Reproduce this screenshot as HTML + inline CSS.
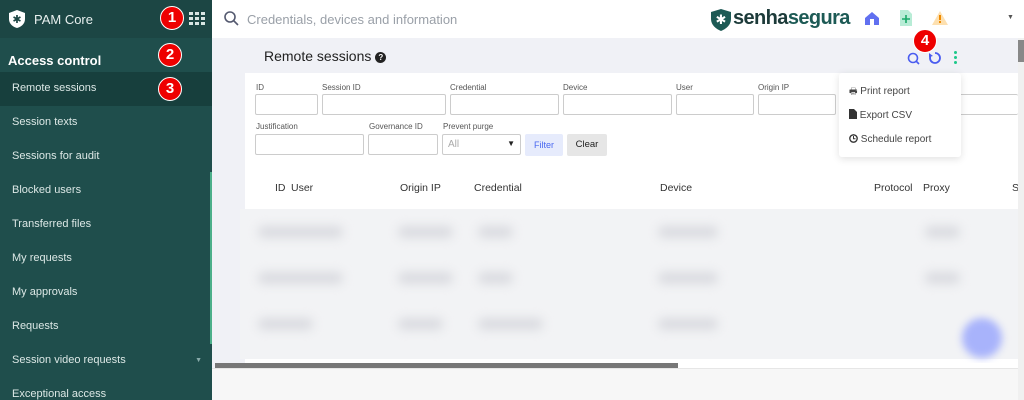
<!DOCTYPE html>
<html style="width:1024px;height:400px;overflow:hidden"><head><meta charset="utf-8"><style>
*{box-sizing:border-box;margin:0;padding:0}
body{width:1024px;height:400px;overflow:hidden;font-family:"Liberation Sans",sans-serif;background:#f0f1f6;position:relative}
.side{position:absolute;left:0;top:0;width:212px;height:400px;background:#1f4e4c;color:#e6efee;overflow:hidden}
.sidetop{height:38px;background:#1c4644;display:flex;align-items:center;padding-left:8px}
.sidetop span{font-size:13px;margin-left:8px;color:#e8f0ef}
.sec{font-size:13px;font-weight:bold;color:#fff;padding:15px 0 0 8px;height:34px}
.item{font-size:11px;height:34px;line-height:33px;padding-left:12px;color:#dce8e6}
.item.act{background:#173f3d}
.badge{position:absolute;width:24px;height:24px;border-radius:50%;background:#e00;border:1.5px solid #fff;color:#fff;font-weight:bold;font-size:15px;text-align:center;line-height:21px}
.top{position:absolute;left:212px;top:0;right:0;height:38px;background:#fff}
.ph{position:absolute;left:35px;top:12px;font-size:13px;color:#9aa0a8}
.card{position:absolute;left:245px;top:73px;width:773px;height:290px;background:#fff}
.lbl{position:absolute;font-size:8px;color:#555}
.inp{position:absolute;height:21px;border:1px solid #ccc;border-radius:2px;background:#fff}
.th{position:absolute;top:182px;font-size:10.5px;color:#333}
.blur{position:absolute;height:12px;background:#dadbe0;border-radius:6px;filter:blur(5px)}
.menu{position:absolute;left:839px;top:73px;width:122px;height:84px;background:#fff;box-shadow:0 2px 8px rgba(0,0,0,.12);border-radius:3px;font-size:10px;color:#444}
.menu div{position:absolute;left:10px}
</style></head><body>
<div class="side">
 <div class="sidetop"><svg width="18" height="20" viewBox="0 0 18 20"><path d="M9 1 L17 4 V10 C17 15 13 18 9 19 C5 18 1 15 1 10 V4 Z" fill="#fff"/><text x="9" y="14" font-size="11" text-anchor="middle" fill="#1c4644">✱</text></svg><span>PAM Core</span>
 <svg style="position:absolute;left:189px;top:12px" width="16" height="14"><g fill="#d8e6e4"><rect x="0" y="0" width="4" height="3"/><rect x="6" y="0" width="4" height="3"/><rect x="12" y="0" width="4" height="3"/><rect x="0" y="5" width="4" height="3"/><rect x="6" y="5" width="4" height="3"/><rect x="12" y="5" width="4" height="3"/><rect x="0" y="10" width="4" height="3"/><rect x="6" y="10" width="4" height="3"/><rect x="12" y="10" width="4" height="3"/></g></svg></div>
 <div class="sec">Access control</div>
 <div class="item act">Remote sessions</div>
 <div class="item">Session texts</div>
 <div class="item">Sessions for audit</div>
 <div class="item">Blocked users</div>
 <div class="item">Transferred files</div>
 <div class="item">My requests</div>
 <div class="item">My approvals</div>
 <div class="item">Requests</div>
 <div class="item">Session video requests<span style="float:right;margin-right:10px;font-size:7px;color:#8aa">▼</span></div>
 <div class="item">Exceptional access</div>
 <div style="position:absolute;left:210px;top:172px;width:3px;height:172px;background:#4caf8a"></div>
</div>
<div class="badge" style="left:160px;top:6px">1</div>
<div class="badge" style="left:158px;top:43px">2</div>
<div class="badge" style="left:158px;top:77px">3</div>
<div class="top">
 <svg style="position:absolute;left:12px;top:11px" width="15" height="15"><circle cx="6" cy="6" r="5" fill="none" stroke="#555a70" stroke-width="1.6"/><line x1="10" y1="10" x2="14" y2="14" stroke="#555a70" stroke-width="1.6"/></svg>
 <div class="ph">Credentials, devices and information</div>
 <svg style="position:absolute;left:498px;top:8px" width="22" height="24" viewBox="0 0 22 24"><path d="M11 1 L21 4 V11 C21 17 16 21 11 23 C6 21 1 17 1 11 V4 Z" fill="#1d5a55"/><text x="11" y="16" font-size="13" text-anchor="middle" fill="#fff">✱</text></svg>
 <div style="position:absolute;left:521px;top:7px;font-size:20px;font-weight:bold;color:#1d3b3a;letter-spacing:-0.6px">senha<span style="color:#1d5a55">segura</span></div>
 <svg style="position:absolute;left:653px;top:12px" width="14" height="13"><path d="M7 0 L14 6 V13 H0 V6 Z" fill="#6170f0"/><rect x="5" y="7" width="4" height="6" fill="#fff"/></svg>
 <svg style="position:absolute;left:688px;top:10px" width="12" height="16"><path d="M0 0 H8 L12 4 V16 H0 Z" fill="#b8ecd6"/><path d="M6 5 V13 M2 9 H10" stroke="#18a868" stroke-width="1.6"/></svg>
 <svg style="position:absolute;left:720px;top:11px" width="16" height="14"><path d="M8 0 L16 14 H0 Z" fill="#fde0b0"/><rect x="7" y="4" width="2" height="5" fill="#f08a00"/><rect x="7" y="10" width="2" height="2" fill="#f08a00"/></svg>
 <div style="position:absolute;left:795px;top:14px;font-size:7px;color:#555">▼</div>
</div>
<div style="position:absolute;left:264px;top:48px;font-size:14px;color:#222">Remote sessions <span style="display:inline-block;width:11px;height:11px;border-radius:50%;background:#222;color:#fff;font-size:8px;text-align:center;line-height:11px;font-weight:bold;vertical-align:1px">?</span></div>
<svg style="position:absolute;left:907px;top:52px" width="14" height="14"><circle cx="6" cy="6" r="4.5" fill="none" stroke="#4a5cf0" stroke-width="1.6"/><line x1="9" y1="9" x2="12" y2="12" stroke="#4a5cf0" stroke-width="1.6"/></svg>
<svg style="position:absolute;left:928px;top:51px" width="14" height="14"><path d="M3 4 A5 5 0 1 0 7 2" fill="none" stroke="#4a5cf0" stroke-width="1.8"/><path d="M1 2 L5 5 L1 6 Z" fill="#4a5cf0"/></svg>
<div style="position:absolute;left:954px;top:51px;width:3px"><div style="width:3px;height:3px;border-radius:50%;background:#1cc88a;margin-bottom:2px"></div><div style="width:3px;height:3px;border-radius:50%;background:#1cc88a;margin-bottom:2px"></div><div style="width:3px;height:3px;border-radius:50%;background:#1cc88a"></div></div>
<div class="card"></div>
<div class="lbl" style="left:256px;top:83px">ID</div><div class="inp" style="left:255px;top:94px;width:63px"></div>
<div class="lbl" style="left:322px;top:83px">Session ID</div><div class="inp" style="left:322px;top:94px;width:124px"></div>
<div class="lbl" style="left:450px;top:83px">Credential</div><div class="inp" style="left:450px;top:94px;width:109px"></div>
<div class="lbl" style="left:563px;top:83px">Device</div><div class="inp" style="left:563px;top:94px;width:109px"></div>
<div class="lbl" style="left:676px;top:83px">User</div><div class="inp" style="left:676px;top:94px;width:78px"></div>
<div class="lbl" style="left:758px;top:83px">Origin IP</div><div class="inp" style="left:758px;top:94px;width:78px"></div>
<div class="inp" style="left:958px;top:94px;width:60px;border-right:none"></div>
<div class="lbl" style="left:256px;top:122px">Justification</div><div class="inp" style="left:255px;top:134px;width:109px"></div>
<div class="lbl" style="left:369px;top:122px">Governance ID</div><div class="inp" style="left:368px;top:134px;width:70px"></div>
<div class="lbl" style="left:443px;top:122px">Prevent purge</div><div class="inp" style="left:442px;top:134px;width:79px;font-size:10px;color:#aaa;padding:4px 5px">All<span style="float:right;color:#222;font-size:8px">▼</span></div>
<div style="position:absolute;left:525px;top:134px;width:38px;height:22px;background:#e6ebfc;border-radius:2px;font-size:9px;color:#4a68f0;text-align:center;line-height:22px">Filter</div>
<div style="position:absolute;left:567px;top:134px;width:40px;height:22px;background:#e6e6e6;border-radius:2px;font-size:9.5px;color:#222;text-align:center;line-height:22px">Clear</div>
<div class="th" style="left:275px">ID</div><div class="th" style="left:291px">User</div><div class="th" style="left:400px">Origin IP</div><div class="th" style="left:474px">Credential</div><div class="th" style="left:660px">Device</div><div class="th" style="left:874px">Protocol</div><div class="th" style="left:923px">Proxy</div><div class="th" style="left:1012px">S</div>
<div style="position:absolute;left:240px;top:209px;width:778px;height:150px;background:#f2f3f5"></div>
<div class="blur" style="left:258px;top:226px;width:85px"></div><div class="blur" style="left:398px;top:226px;width:55px"></div><div class="blur" style="left:478px;top:226px;width:35px"></div><div class="blur" style="left:658px;top:226px;width:60px"></div><div class="blur" style="left:925px;top:226px;width:35px"></div>
<div class="blur" style="left:258px;top:272px;width:85px"></div><div class="blur" style="left:398px;top:272px;width:55px"></div><div class="blur" style="left:478px;top:272px;width:35px"></div><div class="blur" style="left:658px;top:272px;width:60px"></div><div class="blur" style="left:925px;top:272px;width:35px"></div>
<div class="blur" style="left:258px;top:318px;width:55px"></div><div class="blur" style="left:398px;top:318px;width:45px"></div><div class="blur" style="left:478px;top:318px;width:65px"></div><div class="blur" style="left:658px;top:318px;width:60px"></div>
<div style="position:absolute;left:962px;top:318px;width:40px;height:40px;border-radius:50%;background:#a8b3fb;filter:blur(4px)"></div>
<div style="position:absolute;left:215px;top:363px;width:803px;height:5px;background:#fff"></div>
<div style="position:absolute;left:215px;top:363px;width:463px;height:5px;background:#777"></div>
<div style="position:absolute;left:212px;top:368px;width:806px;height:32px;background:#f7f7f7;border-top:1px solid #e6e6e6"></div>
<div style="position:absolute;left:1018px;top:38px;width:6px;height:362px;background:#f0f0f0"></div>
<div style="position:absolute;left:1018px;top:40px;width:6px;height:22px;background:#888"></div>
<div class="menu">
 <div style="top:11px"><span style="font-size:9px">🖶</span> Print report</div>
 <div style="top:36px"><svg width="8" height="10" style="vertical-align:-1px"><path d="M0 0H5L8 3V10H0Z" fill="#333"/></svg> Export CSV</div>
 <div style="top:61px"><svg width="9" height="9" style="vertical-align:-1px"><circle cx="4.5" cy="4.5" r="3.7" fill="none" stroke="#333" stroke-width="1.3"/><path d="M4.5 2V4.7H6.5" stroke="#333" fill="none"/></svg> Schedule report</div>
</div>
<div class="badge" style="left:913px;top:29px">4</div>
</body></html>
